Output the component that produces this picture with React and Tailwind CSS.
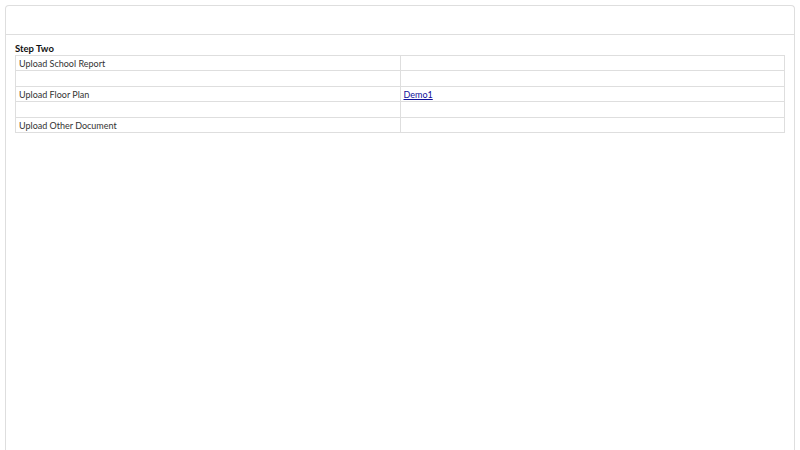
import React from "react";

const rows = [
	{ label: "Upload School Report", value: null },
	{ label: "", value: null },
	{ label: "Upload Floor Plan", value: "Demo1" },
	{ label: "", value: null },
	{ label: "Upload Other Document", value: null },
];

const App = () => {
	return (
		<div
			className="min-h-screen bg-white p-[5px] pb-0 text-[9px] text-[#333]"
			style={{ fontFamily: 'Lato, "Noto Sans", sans-serif' }}
		>
			<div className="h-[460px] rounded-t-[4px] border border-b-0 border-[#dedede]">
				{/* Header */}
				<div className="h-[29px] border-b border-[#dedede]"></div>

				{/* Body */}
				<div className="px-[9px] pt-[8px]">
					<h3 className="text-[9.5px] font-bold leading-[12px] text-[#111]">
						Step Two
					</h3>
					<table className="w-full border-collapse border border-[#dedede]">
						<tbody>
							{rows.map((row, i) => (
								<tr key={i} className="h-[15.4px]">
									<td className="w-1/2 border border-[#dedede] px-[3px] pt-[1px] pb-0 leading-[13px]">
										{row.label}
									</td>
									<td className="w-1/2 border border-[#dedede] px-[3px] pt-[1px] pb-0 leading-[13px]">
										{row.value && (
											<a href="#" className="text-[#10109a] underline">
												{row.value}
											</a>
										)}
									</td>
								</tr>
							))}
						</tbody>
					</table>
				</div>
			</div>
		</div>
	);
};

export default App;
